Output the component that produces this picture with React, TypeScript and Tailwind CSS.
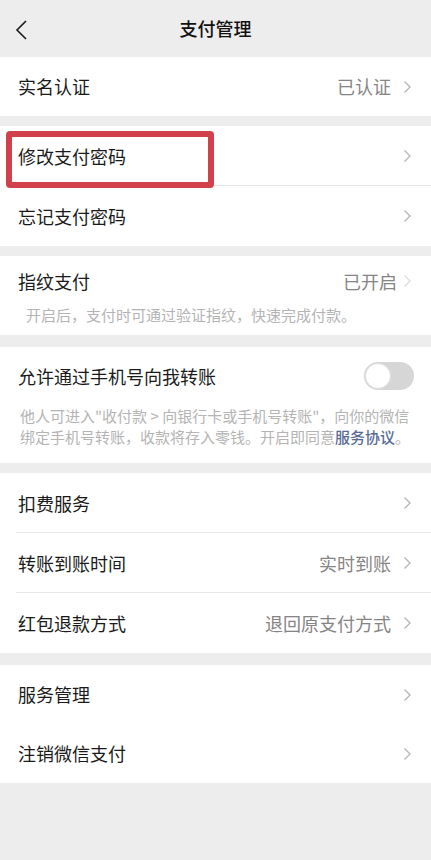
const font = { fontFamily: '"Noto Sans CJK SC", "Noto Sans", sans-serif' };

const Chevron = () => (
  <svg width="9" height="14" viewBox="0 0 9 14" className="ml-[12px] shrink-0">
    <path d="M1.5 1.5 L7 7 L1.5 12.5" fill="none" stroke="#b6b6b6" strokeWidth="1.4" />
  </svg>
);

const Row = ({
  label,
  value,
  divider,
  highlight,
  h = "h-[60px]",
}: {
  label: string;
  value?: string;
  divider?: boolean;
  highlight?: boolean;
  h?: string;
}) => (
  <div className={`relative flex items-center ${h} pl-[18px] pr-[19px]`}>
    <span className="flex-1 text-[18px] text-[#1a1a1a]">{label}</span>
    {value && <span className="text-[18px] text-[#858585]">{value}</span>}
    <Chevron />
    {divider && <div className="absolute bottom-0 left-[16px] right-0 h-px bg-[#e6e6e6]" />}
    {highlight && (
      <div className="absolute left-[6px] top-[5px] h-[57px] w-[208px] rounded-[4px] border-[6px] border-[#d1404b]" />
    )}
  </div>
);

const Toggle = () => (
  <div className="flex h-[28px] w-[50px] items-center rounded-full bg-[#d6d6d6] p-px">
    <div className="h-[26px] w-[26px] rounded-full border border-[#e0e0e0] bg-white" />
  </div>
);

export default function App() {
  return (
    <div className="min-h-[860px] w-[431px] bg-[#ededed]" style={font}>
      <div className="relative flex h-[57px] items-center justify-center">
        <svg width="14" height="20" viewBox="0 0 14 20" className="absolute left-[15px] top-[20px]">
          <path d="M11 1 L2 10 L11 19" fill="none" stroke="#1a1a1a" strokeWidth="1.6" />
        </svg>
        <span className="text-[18px] font-medium text-[#111]">支付管理</span>
      </div>

      <div className="bg-white">
        <Row label="实名认证" value="已认证" h="h-[59px]" />
      </div>

      <div className="mt-[10px] bg-white">
        <Row label="修改支付密码" divider highlight />
        <Row label="忘记支付密码" />
      </div>

      <div className="mt-[10px] flex h-[79px] flex-col bg-white">
        <div className="flex h-[50px] items-center pl-[18px] pr-[19px]">
          <span className="flex-1 text-[18px] text-[#1a1a1a]">指纹支付</span>
          <span className="text-[18px] text-[#858585]">已开启</span>
          <svg width="9" height="14" viewBox="0 0 9 14" className="ml-[6px]">
            <path d="M1.5 1.5 L7 7 L1.5 12.5" fill="none" stroke="#dedede" strokeWidth="1.4" />
          </svg>
        </div>
        <div className="pl-[26px] text-[15px] leading-[18px] text-[#b4b4b4]">
          开启后，支付时可通过验证指纹，快速完成付款。
        </div>
      </div>

      <div className="mt-[12px] h-[116px] bg-white">
        <div className="flex h-[58px] items-center pl-[18px] pr-[17px]">
          <span className="flex-1 text-[18px] text-[#1a1a1a]">允许通过手机号向我转账</span>
          <Toggle />
        </div>
        <div className="pl-[20px] text-[15px] leading-[21px] text-[#b4b4b4] whitespace-nowrap">
          <div>他人可进入"收付款 &gt; 向银行卡或手机号转账"，向你的微信</div>
          <div>
            绑定手机号转账，收款将存入零钱。开启即同意
            <span className="font-medium text-[#576b95]">服务协议</span>。
          </div>
        </div>
      </div>

      <div className="mt-[10px] bg-white">
        <Row label="扣费服务" divider />
        <Row label="转账到账时间" value="实时到账" divider />
        <Row label="红包退款方式" value="退回原支付方式" />
      </div>

      <div className="mt-[12px] bg-white">
        <Row label="服务管理" h="h-[59px]" />
        <Row label="注销微信支付" h="h-[59px]" />
      </div>
    </div>
  );
}
